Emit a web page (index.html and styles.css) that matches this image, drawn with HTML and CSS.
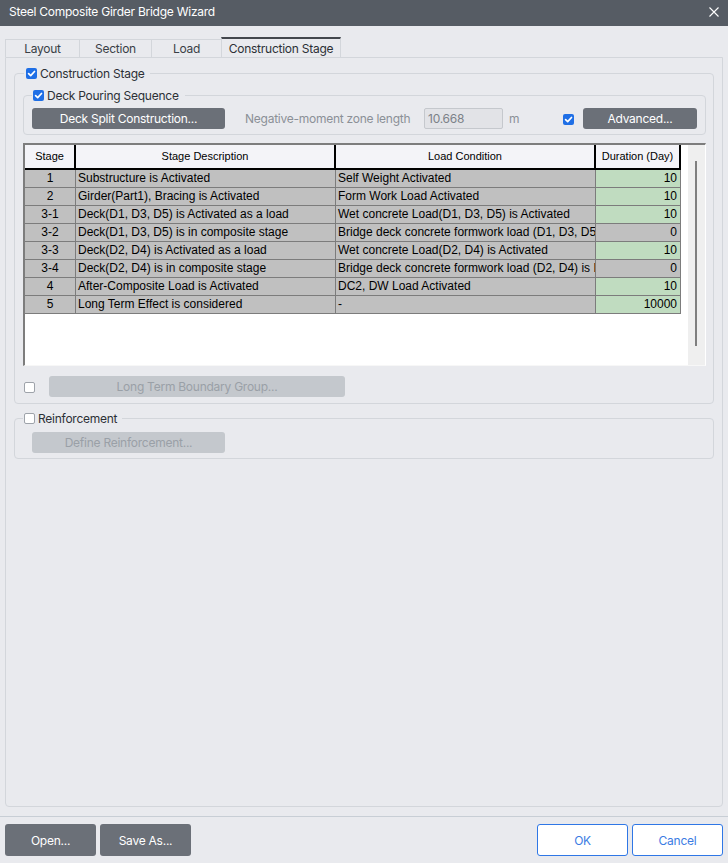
FILE: index.html
```html
<!DOCTYPE html>
<html>
<head>
<meta charset="utf-8">
<title>Steel Composite Girder Bridge Wizard</title>
<link rel="stylesheet" href="styles.css">
</head>
<body>
<div class="window">
  <div class="titlebar">
    <span class="title">Steel Composite Girder Bridge Wizard</span>
    <svg class="close" viewBox="0 0 10 10" width="10" height="10"><path d="M0.5 0.5 L9.5 9.5 M9.5 0.5 L0.5 9.5" stroke="#fff" stroke-width="1.1" fill="none"/></svg>
  </div>

  <div class="tabs">
    <div class="tab t-layout">Layout</div>
    <div class="tab t-section">Section</div>
    <div class="tab t-load">Load</div>
    <div class="tab active">Construction Stage</div>
  </div>

  <div class="pane">
    <fieldset class="group g-stage">
      <legend class="legend l-stage">
        <span class="cb on"><svg viewBox="0 0 11 11" width="11" height="11"><path d="M2.6 5.6 L4.7 7.6 L8.5 3.5" stroke="#fff" stroke-width="1.7" fill="none" stroke-linecap="round" stroke-linejoin="round"/></svg></span>
        <span>Construction Stage</span>
      </legend>

      <fieldset class="group g-deck">
        <legend class="legend l-deck">
          <span class="cb on"><svg viewBox="0 0 11 11" width="11" height="11"><path d="M2.6 5.6 L4.7 7.6 L8.5 3.5" stroke="#fff" stroke-width="1.7" fill="none" stroke-linecap="round" stroke-linejoin="round"/></svg></span>
          <span>Deck Pouring Sequence</span>
        </legend>
        <div class="deck-row">
          <button class="btn dark b-split">Deck Split Construction...</button>
          <span class="lbl-neg">Negative-moment zone length</span>
          <span class="input">10.668</span>
          <span class="unit">m</span>
          <span class="cb on cb-adv"><svg viewBox="0 0 11 11" width="11" height="11"><path d="M2.6 5.6 L4.7 7.6 L8.5 3.5" stroke="#fff" stroke-width="1.7" fill="none" stroke-linecap="round" stroke-linejoin="round"/></svg></span>
          <button class="btn dark b-adv">Advanced...</button>
        </div>
      </fieldset>

      <div class="grid">
        <div class="gbody">
          <div class="grow ghead">
            <div class="c">Stage</div>
            <div class="c">Stage Description</div>
            <div class="c">Load Condition</div>
            <div class="c">Duration (Day)</div>
          </div>
          <div class="grow">
            <div class="c num">1</div>
            <div class="c">Substructure is Activated</div>
            <div class="c">Self Weight Activated</div>
            <div class="c dur green">10</div>
          </div>
          <div class="grow">
            <div class="c num">2</div>
            <div class="c">Girder(Part1), Bracing is Activated</div>
            <div class="c">Form Work Load Activated</div>
            <div class="c dur green">10</div>
          </div>
          <div class="grow">
            <div class="c num">3-1</div>
            <div class="c">Deck(D1, D3, D5) is Activated as a load</div>
            <div class="c">Wet concrete Load(D1, D3, D5) is Activated</div>
            <div class="c dur green">10</div>
          </div>
          <div class="grow">
            <div class="c num">3-2</div>
            <div class="c">Deck(D1, D3, D5) is in composite stage</div>
            <div class="c clip">Bridge deck concrete formwork load (D1, D3, D5) is Deactivated</div>
            <div class="c dur">0</div>
          </div>
          <div class="grow">
            <div class="c num">3-3</div>
            <div class="c">Deck(D2, D4) is Activated as a load</div>
            <div class="c">Wet concrete Load(D2, D4) is Activated</div>
            <div class="c dur green">10</div>
          </div>
          <div class="grow">
            <div class="c num">3-4</div>
            <div class="c">Deck(D2, D4) is in composite stage</div>
            <div class="c clip">Bridge deck concrete formwork load (D2, D4) is Deactivated</div>
            <div class="c dur">0</div>
          </div>
          <div class="grow">
            <div class="c num">4</div>
            <div class="c">After-Composite Load is Activated</div>
            <div class="c">DC2, DW Load Activated</div>
            <div class="c dur green">10</div>
          </div>
          <div class="grow">
            <div class="c num">5</div>
            <div class="c">Long Term Effect is considered</div>
            <div class="c">-</div>
            <div class="c dur green">10000</div>
          </div>
        </div>
        <div class="vscroll"><div class="thumb"></div></div>
      </div>

      <div class="lt-row">
        <span class="cb off"></span>
        <button class="btn disabled b-lt">Long Term Boundary Group...</button>
      </div>
    </fieldset>

    <fieldset class="group g-reinf">
      <legend class="legend l-reinf">
        <span class="cb off"></span>
        <span>Reinforcement</span>
      </legend>
      <button class="btn disabled b-reinf">Define Reinforcement...</button>
    </fieldset>
  </div>

  <div class="footer">
    <button class="btn dark fbtn">Open...</button>
    <button class="btn dark fbtn">Save As...</button>
    <button class="btn outline fbtn ok">OK</button>
    <button class="btn outline fbtn">Cancel</button>
  </div>
</div>
</body>
</html>
```

FILE: styles.css
```css
* { box-sizing: border-box; }
html, body { margin: 0; padding: 0; }
body {
  width: 728px;
  height: 863px;
  overflow: hidden;
  background: #e9eaee;
  font-family: Inter, "Noto Sans", "Liberation Sans", sans-serif;
  font-size: 12px;
  letter-spacing: -0.25px;
  color: #2c3036;
}
.window {
  display: flex;
  flex-direction: column;
  height: 863px;
}

/* title bar */
.titlebar {
  flex: none;
  height: 26px;
  background: #565c64;
  color: #ffffff;
  display: flex;
  align-items: center;
  justify-content: space-between;
  padding: 0 9px 3px 9px;
}
.title { font-size: 12px; }
.close { display: block; margin-top: 0; }

/* tabs */
.tabs {
  flex: none;
  display: flex;
  align-items: flex-end;
  height: 20px;
  margin-top: 11px;
  padding-left: 5px;
}
.tab {
  height: 18px;
  display: flex;
  align-items: center;
  justify-content: center;
  border: 1px solid #d3d6db;
  border-bottom: none;
  border-right: none;
  color: #3a3f46;
  padding-bottom: 1px;
}
.t-layout { width: 74px; }
.t-section { width: 72px; }
.t-load { width: 70px; }
.tab.active {
  width: 120px;
  height: 20px;
  border-top: 2px solid #43474d;
  border-right: 1px solid #d3d6db;
  color: #2c3036;
  padding-bottom: 0;
}

/* pane */
.pane {
  flex: 1;
  margin: 0 5px;
  border: 1px solid #d3d6db;
  border-radius: 0 0 4px 4px;
  padding: 8px 8px 0 8px;
}

/* group boxes */
.group {
  margin: 0;
  min-width: 0;
  border: 1px solid #d3d6db;
  border-radius: 4px;
}
.legend {
  display: flex;
  align-items: center;
  height: 14px;
  gap: 3px;
  color: #2c3036;
}
.g-stage { padding: 8px 7px 6px 8px; }
.l-stage { margin-left: 1px; padding: 0 5px 0 2px; }
.g-deck { padding: 6px 8px 5px 8px; }
.l-deck { padding: 0 6px 0 1px; }
.g-reinf { margin-top: 7px; padding: 7px 7px 5px 8px; }
.l-reinf { padding: 0 5px 0 1px; }

/* checkboxes */
.cb {
  flex: none;
  width: 11px;
  height: 11px;
  border-radius: 2px;
  display: block;
}
.cb svg { display: block; }
.cb.on { background: #1f6fe6; }
.cb.off { background: #ffffff; border: 1px solid #9ea3aa; }

/* buttons */
.btn {
  border: none;
  border-radius: 3px;
  font-family: Inter, "Noto Sans", "Liberation Sans", sans-serif;
  font-size: 12px;
  letter-spacing: -0.25px;
  padding: 0;
  height: 21px;
  display: block;
}
.btn.dark { background: #6b7078; color: #ffffff; }
.btn.disabled { background: #c4c8cd; color: #9aa0a7; }
.btn.outline {
  background: #ffffff;
  color: #3b7ce3;
  border: 1px solid #2f77e6;
}

/* deck row */
.deck-row {
  display: flex;
  align-items: center;
  height: 21px;
}
.b-split { width: 193px; }
.lbl-neg {
  width: 179px;
  margin-left: 20px;
  color: #8b9097;
  white-space: nowrap;
}
.input {
  width: 79px;
  height: 21px;
  background: #e2e3e7;
  border: 1px solid #c5c8cd;
  border-radius: 2px;
  color: #7c8188;
  padding-left: 3px;
  display: flex;
  align-items: center;
}
.unit { margin-left: 6px; color: #8b9097; }
.cb-adv { margin-left: auto; margin-right: 9px; margin-top: 1px; }
.b-adv { width: 114px; }

/* data grid */
.grid {
  margin-top: 8px;
  height: 223px;
  display: flex;
  background: #ffffff;
  border-top: 2px solid #7d7d7d;
  border-left: 2px solid #7d7d7d;
  border-right: 1px solid #ffffff;
  border-bottom: 1px solid #f7f7f7;
  font-family: "Liberation Sans", Arial, sans-serif;
  letter-spacing: 0;
  color: #000000;
}
.gbody { flex: 1; }
.grow {
  display: grid;
  grid-template-columns: 51px 260px 260px 85px;
  width: 656px;
}
.c {
  height: 18px;
  line-height: 17px;
  padding: 0 2px;
  background: #c0c0c0;
  border-right: 1px solid #7c7c7c;
  border-bottom: 1px solid #7c7c7c;
  white-space: nowrap;
  overflow: hidden;
  font-size: 12px;
}
.c.clip { padding-right: 0; }
.c.num { text-align: center; }
.c.dur { text-align: right; padding-right: 3px; }
.c.green { background: #c0dcc0; }
.ghead .c {
  height: 25px;
  line-height: 23px;
  background: #f4f4f8;
  border-right: 2px solid #000000;
  border-bottom: 2px solid #000000;
  text-align: center;
  font-size: 11px;
}
.vscroll {
  flex: none;
  width: 17px;
  background: #efefef;
  padding: 16px 0 0 7px;
}
.thumb {
  width: 2px;
  height: 185px;
  background: #7f7f7f;
}

/* long term row */
.lt-row {
  display: flex;
  align-items: center;
  margin-top: 10px;
  height: 21px;
}
.lt-row .cb { margin-left: 1px; margin-top: 2px; }
.b-lt { width: 296px; margin-left: 14px; }
.b-reinf { width: 193px; margin-left: 9px; }

/* footer */
.footer {
  flex: none;
  margin-top: 9px;
  border-top: 1px solid #c8ced5;
  padding: 7px 5px;
  display: flex;
  gap: 4px;
}
.fbtn { width: 91px; height: 32px; }
.ok { margin-left: auto; }
```
